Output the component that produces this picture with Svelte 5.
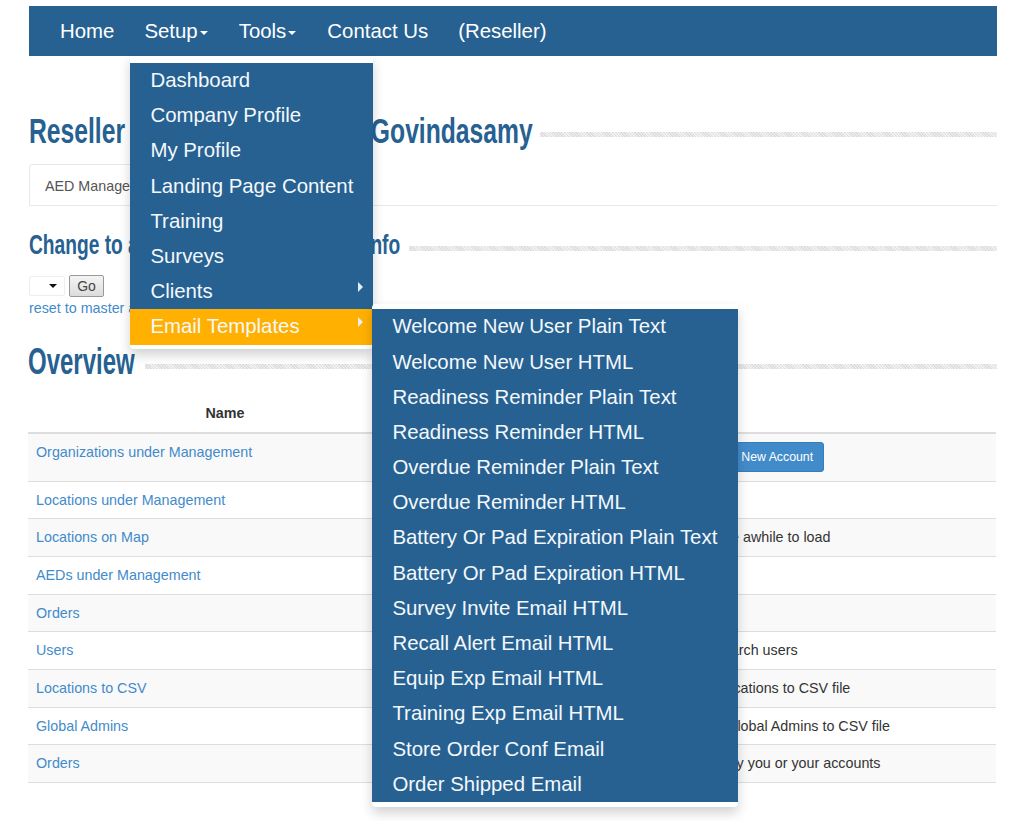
<script>
  const setup = ['Dashboard', 'Company Profile', 'My Profile', 'Landing Page Content', 'Training', 'Surveys'];
  const templates = [
    'Welcome New User Plain Text',
    'Welcome New User HTML',
    'Readiness Reminder Plain Text',
    'Readiness Reminder HTML',
    'Overdue Reminder Plain Text',
    'Overdue Reminder HTML',
    'Battery Or Pad Expiration Plain Text',
    'Battery Or Pad Expiration HTML',
    'Survey Invite Email HTML',
    'Recall Alert Email HTML',
    'Equip Exp Email HTML',
    'Training Exp Email HTML',
    'Store Order Conf Email',
    'Order Shipped Email'
  ];
  const rows = [
    { name: 'Organizations under Management', button: 'Create New Account' },
    { name: 'Locations under Management' },
    { name: 'Locations on Map', note: 'May take awhile to load' },
    { name: 'AEDs under Management' },
    { name: 'Orders' },
    { name: 'Users', note: 'View/search users' },
    { name: 'Locations to CSV', note: 'Save Locations to CSV file' },
    { name: 'Global Admins', note: 'Export Global Admins to CSV file' },
    { name: 'Orders', note: 'Orders by you or your accounts' }
  ];
</script>

<div class="page">
  <nav class="navbar">
    <a href="#home">Home</a>
    <div class="nav-item">
      <a href="#setup">Setup<span class="caret"></span></a>
      <div class="menu">
        <ul class="menu-list">
          {#each setup as item}
            <li><a href="#item">{item}</a></li>
          {/each}
          <li class="has-sub"><a href="#clients">Clients</a></li>
          <li class="has-sub active">
            <a href="#templates">Email Templates</a>
            <div class="submenu">
              <ul class="menu-list">
                {#each templates as item}
                  <li><a href="#item">{item}</a></li>
                {/each}
              </ul>
            </div>
          </li>
        </ul>
      </div>
    </div>
    <a href="#tools">Tools<span class="caret"></span></a>
    <a href="#contact">Contact Us</a>
    <a href="#role">(Reseller)</a>
  </nav>

  <h1 class="heading title"><span>Reseller Dashboard for Arun Govindasamy</span></h1>

  <div class="tabs">
    <a class="tab" href="#aed">AED Management</a>
  </div>

  <h2 class="heading sub"><span>Change to another Reseller Account Info</span></h2>

  <div class="switcher">
    <div class="select-wrap">
      <select aria-label="Reseller"><option></option></select>
      <svg viewBox="0 0 8 4" width="8" height="4"><path d="M0 0h8L4 4z" /></svg>
    </div>
    <button>Go</button>
  </div>
  <a class="reset" href="#reset">reset to master account</a>

  <h1 class="heading overview"><span>Overview</span></h1>

  <table>
    <colgroup>
      <col class="col-name" />
      <col class="col-mid" />
      <col />
    </colgroup>
    <thead>
      <tr><th>Name</th><th></th><th></th></tr>
    </thead>
    <tbody>
      {#each rows as row}
        <tr>
          <td><a href="#row">{row.name}</a></td>
          <td></td>
          <td>
            {#if row.button}
              <button class="primary">{row.button}</button>
            {:else if row.note}
              {row.note}
            {/if}
          </td>
        </tr>
      {/each}
    </tbody>
  </table>
</div>

<style>
  :global(body) {
    background: #fff;
    font-family: "Liberation Sans", Arial, sans-serif;
    color: #333;
  }

  a {
    text-decoration: none;
  }

  .page {
    padding: 6px 27px 0 29px;
    height: 815px;
    overflow: hidden;
  }

  .navbar {
    display: flex;
    height: 50px;
    padding-left: 16px;
    background: #266192;
    font-size: 20.4px;
  }

  .navbar > a,
  .nav-item > a {
    display: block;
    padding: 0 15px;
    line-height: 50px;
    color: #fff;
  }

  .nav-item {
    position: relative;
  }

  .caret {
    display: inline-block;
    margin: 0 1px 0 2px;
    vertical-align: middle;
    border-top: 4px solid #fff;
    border-left: 4px solid transparent;
    border-right: 4px solid transparent;
  }

  .menu {
    position: absolute;
    top: 100%;
    left: 1px;
    z-index: 10;
    width: 243px;
    padding: 7px 0 4px;
    background: #fff;
    border-radius: 0 0 4px 4px;
    box-shadow: 0 6px 12px rgba(0, 0, 0, 0.18);
  }

  .menu-list {
    margin: 0;
    padding: 0;
    list-style: none;
    background: #266192;
  }

  .menu-list li {
    position: relative;
    height: 35.2px;
  }

  .menu-list a {
    display: block;
    padding-left: 20px;
    line-height: 35.2px;
    color: #f4f8fb;
    white-space: nowrap;
  }

  .has-sub::after {
    content: "";
    position: absolute;
    top: 8px;
    right: 10px;
    border-left: 5px solid #e6edf3;
    border-top: 5px solid transparent;
    border-bottom: 5px solid transparent;
  }

  .active {
    background: #ffb000;
  }

  .submenu {
    position: absolute;
    top: -5px;
    left: 242px;
    z-index: 11;
    width: 366px;
    padding: 5px 0;
    background: #fff;
    border-radius: 4px;
    box-shadow: 0 6px 12px rgba(0, 0, 0, 0.18);
  }

  .heading {
    display: flex;
    align-items: center;
    margin: 0;
    color: #266192;
    font-weight: 700;
    white-space: nowrap;
  }

  /* no condensed face installed, so squeeze the bold one */
  .heading span {
    display: block;
    transform-origin: left center;
  }

  .heading::after {
    content: "";
    flex: 1;
    height: 5px;
    margin: 6px 0 0 10px;
    background: repeating-linear-gradient(45deg, #ddd 0 1px, #f2f2f2 1px 2px);
  }

  .title {
    height: 42px;
    margin-top: 54px;
    font-size: 35px;
  }

  .title span {
    width: 501px;
    transform: scaleX(0.705);
  }

  .tabs {
    display: flex;
    margin-top: 12px;
    height: 41px;
    border-bottom: 1px solid #e8e8e8;
  }

  .tab {
    padding: 0 15px;
    line-height: 42px;
    font-size: 14.3px;
    color: #555;
    background: #fff;
    border: 1px solid #e8e8e8;
    border-bottom: 0;
    border-radius: 4px 4px 0 0;
  }

  .sub {
    height: 34px;
    margin-top: 22px;
    font-size: 28px;
  }

  .sub span {
    width: 370px;
    transform: scaleX(0.685);
  }

  .switcher {
    display: flex;
    align-items: center;
    gap: 4px;
    margin-top: 13px;
  }

  .select-wrap {
    position: relative;
    width: 36px;
    height: 20px;
  }

  .select-wrap select {
    appearance: none;
    display: block;
    width: 100%;
    height: 100%;
    padding: 0;
    background: #fff;
    border: 1px solid #eee;
    border-radius: 2px;
  }

  .select-wrap svg {
    position: absolute;
    top: 8px;
    right: 8px;
    fill: #111;
  }

  .switcher button {
    width: 35px;
    height: 22px;
    padding: 0;
    font: 14px "Liberation Sans", sans-serif;
    color: #444;
    background: linear-gradient(#f4f4f4, #dcdcdc);
    border: 1px solid #999;
    border-radius: 2px;
  }

  .reset {
    display: block;
    margin-top: 1px;
    font-size: 14.3px;
    line-height: 20px;
    color: #428bca;
  }

  .overview {
    height: 46px;
    margin-top: 20px;
    margin-left: -1px;
    font-size: 37.5px;
  }

  .overview::after {
    margin-top: 10px;
  }

  .overview span {
    width: 107px;
    transform: scaleX(0.64);
  }

  table {
    width: 968px;
    margin: 18px 0 0 -1px;
    border-collapse: collapse;
    table-layout: fixed;
    font-size: 14.3px;
  }

  .col-name {
    width: 394px;
  }

  .col-mid {
    width: 251px;
  }

  th {
    box-sizing: border-box;
    height: 31px;
    padding: 0 8px 8px;
    color: #333;
    font-weight: 700;
    border-bottom: 2px solid #ddd;
  }

  td {
    height: 37.7px;
    padding: 8px;
    box-sizing: border-box;
    vertical-align: top;
    line-height: 20px;
    border-bottom: 1px solid #ddd;
    white-space: nowrap;
  }

  tbody tr:first-child td {
    height: 48px;
  }

  tbody tr:nth-child(odd) td {
    background: #f9f9f9;
  }

  td a {
    color: #428bca;
  }

  .primary {
    height: 30px;
    margin-left: 7px;
    padding: 0 10px 0 12px;
    font: 12.3px "Liberation Sans", sans-serif;
    color: #fff;
    background: #428bca;
    border: 1px solid #357ebd;
    border-radius: 3px;
  }
</style>
